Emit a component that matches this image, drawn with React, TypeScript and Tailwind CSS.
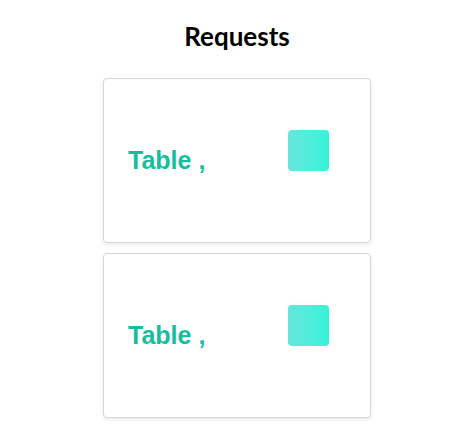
export default function App() {
  const cards = [0, 1]
  return (
    <div className="flex flex-col items-center bg-white min-h-screen pt-[21px]">
      <h1 className="text-[26px] leading-[31px] font-bold text-black" style={{ fontFamily: 'Lato, sans-serif' }}>
        Requests
      </h1>
      <div className="flex flex-col gap-[10px] mt-[26px]">
        {cards.map(i => (
          <div
            key={i}
            className="w-[268px] h-[165px] flex items-center bg-white border border-[#d6d6d6] rounded-[4px] shadow-[0_2px_4px_rgba(0,0,0,0.08)] pl-[24px] pr-[41px]"
          >
            <span
              className="text-[25px] font-bold text-[#17bd9d]"
              style={{ fontFamily: '"Liberation Sans", Arial, sans-serif' }}
            >
              Table ,
            </span>
            <div className="ml-auto mb-[20px] w-[41px] h-[41px] rounded-[4px] bg-gradient-to-r from-[#66e5dc] to-[#30f4d8] shadow-[0_0_6px_rgba(0,0,0,0.03)]" />
          </div>
        ))}
      </div>
    </div>
  )
}
